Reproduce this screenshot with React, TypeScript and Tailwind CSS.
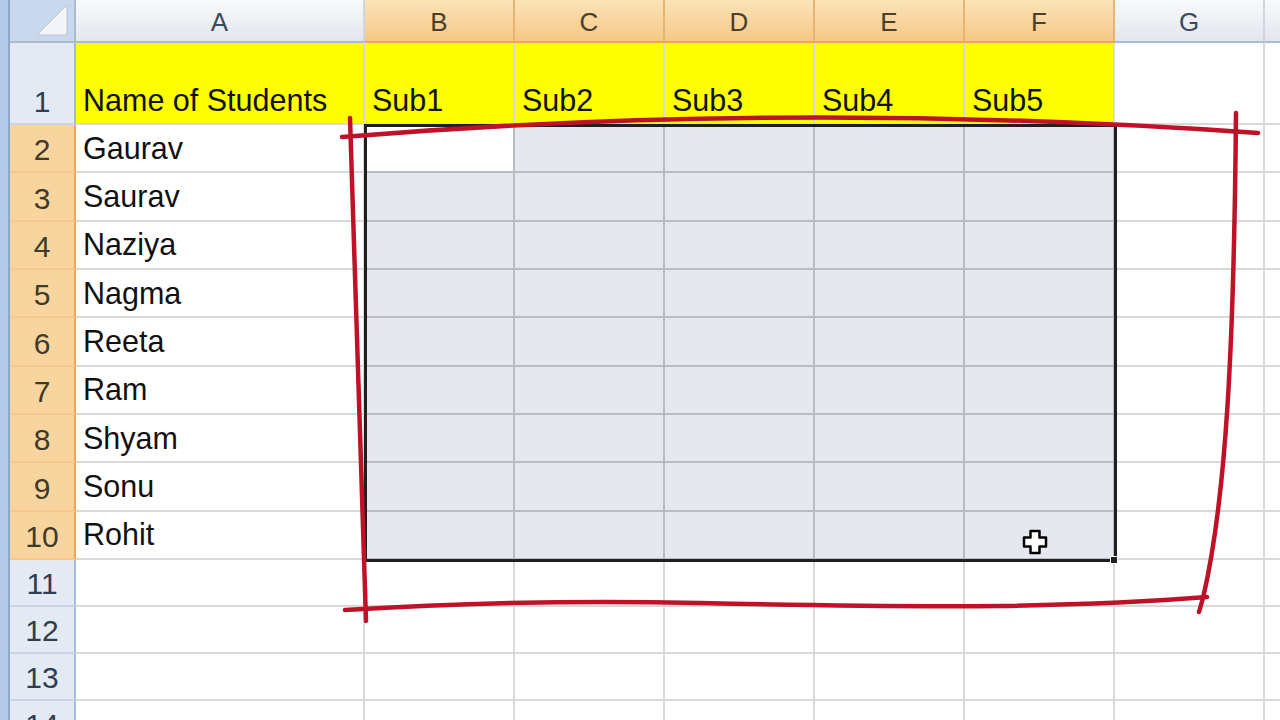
import React from "react";

const cols = ["A", "B", "C", "D", "E", "F", "G", ""];
const colW = ["w-[289px]", "w-[150px]", "w-[150px]", "w-[150px]", "w-[150px]", "w-[150px]", "w-[150px]", "w-[150px]"];
const names = ["Gaurav", "Saurav", "Naziya", "Nagma", "Reeta", "Ram", "Shyam", "Sonu", "Rohit"];

function ColHeader({ label, i }: { label: string; i: number }) {
  const sel = i >= 1 && i <= 5;
  return (
    <div
      className={`${colW[i]} h-full shrink-0 flex items-center justify-center border-r-2 border-b-2 ${
        sel
          ? "bg-linear-to-b from-[#fbe3b8] to-[#f5c885] border-r-[#e6b473] border-b-[#eea64f] text-[#4a3f2c]"
          : "bg-linear-to-b from-[#f8f9fb] to-[#e2e7ee] border-r-[#cfd6df] border-b-[#a9bbd0] text-[#3b4a5c]"
      }`}
    >
      <span className="text-[26px] leading-none pt-[3px]">{label}</span>
    </div>
  );
}

function RowHeader({ n, sel }: { n: number; sel: boolean }) {
  return (
    <div
      className={`w-[66px] h-full shrink-0 flex items-end justify-center pb-[6px] border-r-2 border-b-2 ${
        sel
          ? "bg-[#f8d59e] border-r-[#eea64f] border-b-[#f3c98e] text-[#3f3a2a]"
          : "bg-[#e3eaf4] border-r-[#a9bbd0] border-b-[#c9d5e4] text-[#2f3e50]"
      }`}
    >
      <span className="text-[30px] leading-none">{n}</span>
    </div>
  );
}

function Cell({ i, bg, text, inSel }: { i: number; bg: string; text?: string; inSel: boolean }) {
  return (
    <div
      className={`${colW[i]} h-full shrink-0 flex items-end pl-[7px] pb-[8px] border-r-2 border-b-2 ${bg} ${
        inSel ? "border-[#b9bcc2]" : "border-[#d9d9d9]"
      }`}
    >
      {text && <span className="text-[30.5px] leading-none text-[#111] whitespace-nowrap">{text}</span>}
    </div>
  );
}

export default function App() {
  const rows = [
    { n: 1, h: "h-[82px]" },
    ...names.map((_, k) => ({ n: k + 2, h: "h-[48.33px]" })),
    { n: 11, h: "h-[47px]" },
    { n: 12, h: "h-[47px]" },
    { n: 13, h: "h-[47px]" },
    { n: 14, h: "h-[47px]" },
  ];

  return (
    <div
      className="relative w-[1280px] h-[720px] overflow-hidden bg-white flex"
      style={{ fontFamily: '"Liberation Sans", Arial, sans-serif' }}
    >
      {/* window edge */}
      <div className="w-[10px] h-full shrink-0 bg-[#b5cbea] border-r-2 border-[#8fa8c8]" />

      <div className="flex flex-col shrink-0">
        {/* column headers */}
        <div className="flex h-[43px] shrink-0">
          <div className="relative w-[66px] h-full shrink-0 bg-[#c9d8ec] border-r-2 border-b-2 border-[#a9bbd0]">
            <svg className="absolute right-[6px] bottom-[5px]" width="32" height="32" viewBox="0 0 32 32">
              <polygon points="31,1 31,31 1,31" fill="#f3f5f8" stroke="#b5c3d4" strokeWidth="1" />
            </svg>
          </div>
          {cols.map((c, i) => (
            <ColHeader key={i} label={c} i={i} />
          ))}
        </div>

        {rows.map((r) => {
          const selRow = r.n >= 2 && r.n <= 10;
          return (
            <div key={r.n} className={`flex ${r.h} shrink-0`}>
              <RowHeader n={r.n} sel={selRow} />
              {cols.map((c, i) => {
                let bg = "bg-white";
                let text: string | undefined;
                const inSel = selRow && i >= 1 && i <= 5;
                if (r.n === 1 && i <= 5) bg = "bg-[#ffff00]";
                if (inSel && !(r.n === 2 && i === 1)) bg = "bg-[#e5e8ef]";
                if (r.n === 1) text = i === 0 ? "Name of Students" : i <= 5 ? `Sub${i}` : undefined;
                if (selRow && i === 0) text = names[r.n - 2];
                return <Cell key={i} i={i} bg={bg} text={text} inSel={inSel} />;
              })}
            </div>
          );
        })}
      </div>

      {/* selection border */}
      <div className="absolute left-[364px] top-[124px] w-[753px] h-[438px] border-[3px] border-[#1f1f1f]" />
      <div className="absolute left-[1110px] top-[556px] w-[8px] h-[8px] bg-[#1f1f1f] border border-white" />

      {/* hand-drawn annotation */}
      <svg className="absolute inset-0 pointer-events-none" width="1280" height="720" viewBox="0 0 1280 720">
        <g fill="none" stroke="#bf1229" strokeWidth="4.5" strokeLinecap="round" strokeLinejoin="round">
          <path d="M342 137 Q 790 100 1258 133" />
          <path d="M350 118 Q 358 360 366 621" />
          <path d="M1236 113 C 1234 350 1226 500 1203 598 L 1199 612" />
          <path d="M345 610 Q 520 599 700 603 T 1000 606 Q 1120 604 1207 597" />
        </g>
        {/* cursor */}
        <polygon
          points="1030.5,531 1039.5,531 1039.5,537.5 1046,537.5 1046,546.5 1039.5,546.5 1039.5,553 1030.5,553 1030.5,546.5 1024,546.5 1024,537.5 1030.5,537.5"
          fill="#ffffff"
          stroke="#000000"
          strokeWidth="2.5"
          strokeLinejoin="round"
        />
      </svg>
    </div>
  );
}
